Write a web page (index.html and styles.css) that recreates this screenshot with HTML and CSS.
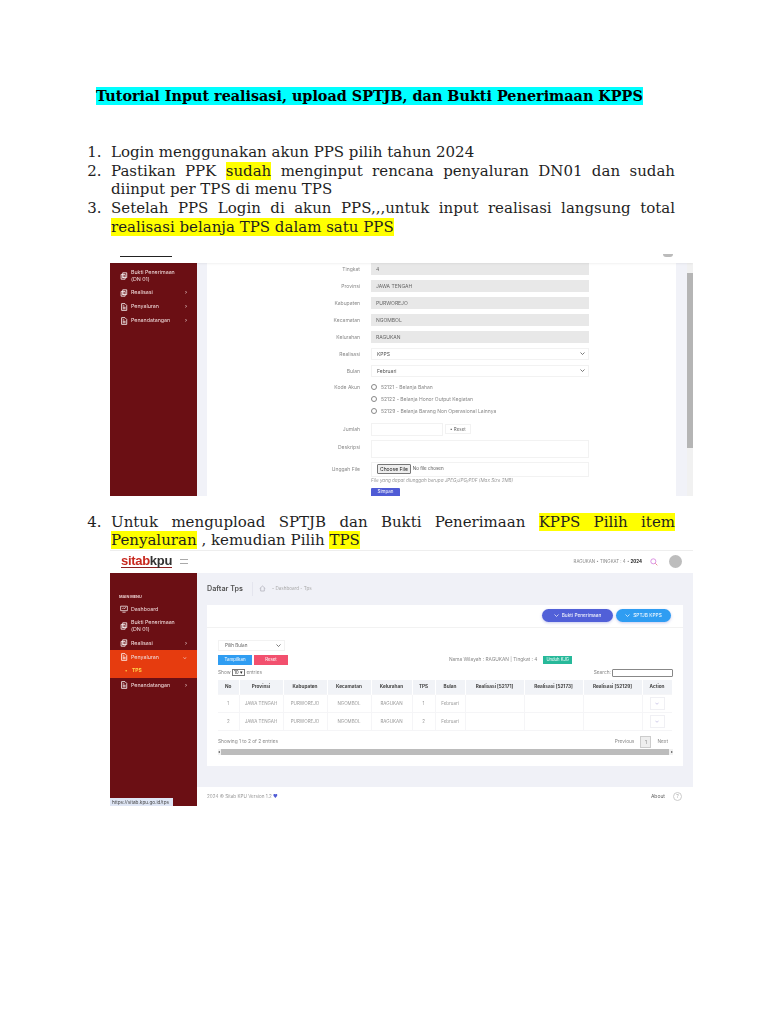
FILE: index.html
```html
<!DOCTYPE html>
<html lang="id">
<head>
  <meta charset="UTF-8">
  <meta name="viewport" content="width=device-width, initial-scale=1">
  <title>Tutorial Input Realisasi</title>
  <link rel="stylesheet" href="styles.css">
</head>
<body>

  <svg class="defs" width="0" height="0" aria-hidden="true">
    <symbol id="i-doc" viewBox="0 0 10 10">
      <path d="M2 .8h4.2L8.4 3v6.2H2z M3.4 3.6h2 M3.4 5.4h3.6 M3.4 7.2h3.6" fill="none" stroke="#fff" stroke-width="1"/>
    </symbol>
    <symbol id="i-stack" viewBox="0 0 10 10">
      <path d="M3.4 1h5v6h-5z M1.4 3h5v6h-5z M2.8 5h2.2 M2.8 7h2.2" fill="none" stroke="#fff" stroke-width="1"/>
    </symbol>
    <symbol id="i-screen" viewBox="0 0 10 10">
      <path d="M.8 1.5h8.4v5.6H.8z M3 9h4 M3 5l1.5-1.5 1 1L7.4 3" fill="none" stroke="#fff" stroke-width=".9"/>
    </symbol>
    <symbol id="i-chev" viewBox="0 0 10 6">
      <path d="M1 1l4 4 4-4" fill="none" stroke="currentColor" stroke-width="1.4"/>
    </symbol>
  </svg>

  <h1 class="title"><mark class="cyan">Tutorial Input realisasi, upload SPTJB, dan Bukti Penerimaan KPPS</mark></h1>

  <ol class="steps">
    <li>Login menggunakan akun PPS pilih tahun 2024</li>
    <li><span class="line">Pastikan PPK <mark>sudah</mark> menginput rencana penyaluran DN01 dan sudah</span> diinput per TPS di menu TPS</li>
    <li>
      <span class="line">Setelah PPS Login di akun PPS,,,untuk input realisasi langsung total</span> <mark>realisasi belanja TPS dalam satu PPS</mark>

      <!-- screenshot form realisasi -->
      <div class="shot shot-form">
        <div class="top-strip">
          <span class="logo-cut"></span>
          <span class="avatar-cut"></span>
        </div>
        <div class="shot-body">
          <nav class="side">
            <a class="side-item"><svg class="ico"><use href="#i-stack"/></svg><span>Bukti Penerimaan<br>(DN 01)</span></a>
            <a class="side-item"><svg class="ico"><use href="#i-stack"/></svg><span>Realisasi</span><i>›</i></a>
            <a class="side-item"><svg class="ico"><use href="#i-doc"/></svg><span>Penyaluran</span><i>›</i></a>
            <a class="side-item"><svg class="ico"><use href="#i-doc"/></svg><span>Penandatangan</span><i>›</i></a>
          </nav>
          <div class="gutter"></div>
          <form class="form">
            <div class="row"><label>Tingkat</label><div class="fld off">4</div></div>
            <div class="row"><label>Provinsi</label><div class="fld off">JAWA TENGAH</div></div>
            <div class="row"><label>Kabupaten</label><div class="fld off">PURWOREJO</div></div>
            <div class="row"><label>Kecamatan</label><div class="fld off">NGOMBOL</div></div>
            <div class="row"><label>Kelurahan</label><div class="fld off">RAGUKAN</div></div>
            <div class="row"><label>Realisasi</label><div class="fld sel">KPPS<svg class="chev"><use href="#i-chev"/></svg></div></div>
            <div class="row"><label>Bulan</label><div class="fld sel">Februari<svg class="chev"><use href="#i-chev"/></svg></div></div>
            <div class="row row-radio">
              <label>Kode Akun</label>
              <div class="radios">
                <div class="radio"><b></b>52121 - Belanja Bahan</div>
                <div class="radio"><b></b>52122 - Belanja Honor Output Kegiatan</div>
                <div class="radio"><b></b>52129 - Belanja Barang Non Operasional Lainnya</div>
              </div>
            </div>
            <div class="row row-sum">
              <label>Jumlah</label>
              <div class="fld sum"></div>
              <div class="reset-mini">▪ Reset</div>
            </div>
            <div class="row row-area"><label>Deskripsi</label><div class="fld area"></div></div>
            <div class="row row-file">
              <label>Unggah File</label>
              <div class="fld file"><span class="file-btn">Choose File</span>No file chosen</div>
            </div>
            <p class="hint">File yang dapat diunggah berupa JPEG/JPG/PDF (Max Size 2MB)</p>
            <div class="save">Simpan</div>
          </form>
          <div class="gutter gutter-r"></div>
          <div class="vbar"><span class="thumb"></span></div>
        </div>
      </div>
    </li>
    <li class="step-four">
      <span class="line">Untuk mengupload SPTJB dan Bukti Penerimaan <mark>KPPS Pilih item</mark></span> <mark>Penyaluran</mark> , kemudian Pilih <mark>TPS</mark>

      <!-- screenshot daftar tps -->
      <div class="shot shot-list">
        <header class="top">
          <div class="brand">
            <span class="brand-name"><em>sitab</em>kpu</span>
            <span class="burger"></span>
          </div>
          <div class="top-right">
            <span class="who">RAGUKAN • TINGKAT : 4 • <b>2024</b></span>
            <svg class="search" viewBox="0 0 12 12"><circle cx="5" cy="5" r="3.8" fill="none" stroke="#d070d8" stroke-width="1.1"/><path d="M8 8l3 3" stroke="#e86a6a" stroke-width="1.1"/></svg>
            <span class="avatar"></span>
          </div>
        </header>
        <div class="shot-body">
          <nav class="side side-list">
            <div class="side-cap">MAIN MENU</div>
            <a class="side-item"><svg class="ico"><use href="#i-screen"/></svg><span>Dashboard</span></a>
            <a class="side-item"><svg class="ico"><use href="#i-stack"/></svg><span>Bukti Penerimaan<br>(DN 01)</span></a>
            <a class="side-item"><svg class="ico"><use href="#i-stack"/></svg><span>Realisasi</span><i>›</i></a>
            <div class="side-active">
              <a class="side-item"><svg class="ico"><use href="#i-doc"/></svg><span>Penyaluran</span><i>⌄</i></a>
              <a class="side-sub">TPS</a>
            </div>
            <a class="side-item"><svg class="ico"><use href="#i-doc"/></svg><span>Penandatangan</span><i>›</i></a>
          </nav>
          <div class="right">
            <div class="main">
              <div class="crumbs">
                <h2>Daftar Tps</h2>
                <svg class="home" viewBox="0 0 10 10"><path d="M1 5l4-3.5L9 5 M2.4 4.4V8.6h5.2V4.4" fill="none" stroke="#9a9aa5" stroke-width=".8"/></svg>
                <span>- Dashboard - Tps</span>
              </div>
              <section class="card">
                <div class="card-head">
                  <span class="pill pill-violet"><svg class="pill-ico"><use href="#i-chev"/></svg>Bukti Penerimaan</span>
                  <span class="pill pill-blue"><svg class="pill-ico"><use href="#i-chev"/></svg>SPTJB KPPS</span>
                </div>
                <div class="card-body">
                  <div class="pick">Pilih Bulan<svg class="chev"><use href="#i-chev"/></svg></div>
                  <div class="tools">
                    <div class="tool-btns">
                      <span class="tbtn tbtn-blue">Tampilkan</span>
                      <span class="tbtn tbtn-red">Reset</span>
                    </div>
                    <div class="region">Nama Wilayah : RAGUKAN | Tingkat : 4 <span class="unduh">Unduh KJG</span></div>
                  </div>
                  <div class="len-row">
                    <div class="len">Show <span class="len-sel">10 ▾</span> entries</div>
                    <div class="find">Search: <span class="find-box"></span></div>
                  </div>
                  <table class="tbl">
                    <colgroup>
                      <col class="c-no"><col class="c-loc"><col class="c-loc"><col class="c-loc"><col class="c-kel">
                      <col class="c-tps"><col class="c-bln"><col class="c-rea"><col class="c-rea"><col class="c-rea"><col class="c-act">
                    </colgroup>
                    <thead>
                      <tr>
                        <th>No</th><th>Provinsi</th><th>Kabupaten</th><th>Kecamatan</th><th>Kelurahan</th>
                        <th>TPS</th><th>Bulan</th><th>Realisasi [52171]</th><th>Realisasi [52173]</th><th>Realisasi [52129]</th><th>Action</th>
                      </tr>
                    </thead>
                    <tbody>
                      <tr>
                        <td>1</td><td>JAWA TENGAH</td><td>PURWOREJO</td><td>NGOMBOL</td><td>RAGUKAN</td>
                        <td>1</td><td>Februari</td><td></td><td></td><td></td><td><span class="act"><svg class="act-ico"><use href="#i-chev"/></svg></span></td>
                      </tr>
                      <tr>
                        <td>2</td><td>JAWA TENGAH</td><td>PURWOREJO</td><td>NGOMBOL</td><td>RAGUKAN</td>
                        <td>2</td><td>Februari</td><td></td><td></td><td></td><td><span class="act"><svg class="act-ico"><use href="#i-chev"/></svg></span></td>
                      </tr>
                    </tbody>
                  </table>
                  <div class="tbl-foot">
                    <span>Showing 1 to 2 of 2 entries</span>
                    <div class="pager">Previous <span class="page-no">1</span> Next</div>
                  </div>
                  <div class="hbar"><span>◂</span><b></b><span>▸</span></div>
                </div>
              </section>
            </div>
            <footer class="foot">
              <span>2024 © Sitab KPU Version 1.2 <em>♥</em></span>
              <div class="foot-r">About <span class="help">?</span></div>
            </footer>
          </div>
        </div>
        <div class="status">https://sitab.kpu.go.id/tps</div>
      </div>
    </li>
  </ol>

</body>
</html>
```

FILE: styles.css
```css
* { margin:0; padding:0; box-sizing:border-box; }
body { width:768px; min-height:1024px; background:#fff; color:#1f1f1f; font-family:"DejaVu Serif", serif; padding-top:87px; }
.defs { position:absolute; }
mark { background:#ffff00; color:inherit; }
mark.cyan { background:#00ffff; padding:1px 0; }

.title { margin-left:96px; font-size:14.36px; line-height:18px; font-weight:700; color:#000; }

.steps { margin:38px 93px 0 87px; padding-left:24px; font-size:15px; line-height:18.7px; }
.steps li { text-align:justify; }
.steps li::marker { content:counter(list-item) ".  "; }
.line { display:block; text-align:justify; text-align-last:justify; white-space:nowrap; }
.step-four { margin-top:17px; }

/* screenshots */
.shot { position:relative; width:583px; margin-left:-1px; background:#fff; overflow:hidden; font-family:Inter, "Liberation Sans", sans-serif; font-size:5px; line-height:1.2; color:#777; text-align:left; text-align-last:auto; filter:blur(.3px); }
.shot-form { height:242px; margin-top:17px; }
.shot-list { height:256px; }
.shot-body { display:flex; }

.side { width:87px; flex:none; background:#6b0f14; color:#f0dcdc; padding-top:3px; }
.side-item { display:flex; align-items:center; gap:3px; padding:3px 0 3px 10px; font-size:5.3px; min-height:14px; }
.side-item span { flex:1; line-height:7px; }
.side-item i { font-style:normal; margin-right:10px; }
.ico { width:8px; height:8px; flex:none; }

/* form */
.top-strip { display:flex; justify-content:space-between; height:9px; box-shadow:0 1px 2px rgba(0,0,0,.06); position:relative; z-index:1; }
.logo-cut { width:52px; height:1px; margin:2px 0 0 10px; background:#222; }
.avatar-cut { width:10px; height:3px; margin-right:20px; background:#bbb; border-radius:0 0 5px 5px; }
.shot-form .shot-body { height:233px; }
.gutter { width:10px; flex:none; background:#f1f2f8; }
.form { width:469px; flex:none; }
.row { display:flex; align-items:center; gap:11px; height:12px; margin-bottom:5px; }
.row label { width:153px; flex:none; text-align:right; font-size:5px; color:#888; }
.fld { width:218px; height:12px; padding-left:5px; display:flex; align-items:center; font-size:5px; color:#666; }
.off { background:#e8e8e8; }
.sel { justify-content:space-between; padding-right:3px; border:1px solid #f2f2f2; color:#555; }
.chev { width:5px; height:3px; color:#444; }
.row-radio { height:36px; align-items:flex-start; padding-top:2px; }
.radios { display:flex; flex-direction:column; gap:5px; font-size:5px; color:#888; }
.radio { display:flex; align-items:center; gap:4px; height:7px; }
.radio b { width:6px; height:6px; border:1px solid #888; border-radius:50%; }
.row-sum { height:13px; margin-bottom:4px; }
.sum { width:72px; height:13px; border:1px solid #f2f2f2; }
.reset-mini { margin-left:-9px; height:10px; padding:2px 4px; border:1px solid #f2f2f2; font-size:4.5px; color:#666; }
.row-area { height:18px; margin-bottom:4px; align-items:flex-start; }
.row-area label { padding-top:4px; }
.area { height:18px; border:1px solid #f2f2f2; }
.row-file { height:15px; margin-bottom:0; }
.file { height:15px; border:1px solid #f2f2f2; font-size:4.5px; color:#555; gap:2px; }
.file-btn { padding:1px 2px; background:#eee; border:1px solid #777; border-radius:1px; color:#222; font-size:5px; }
.hint { margin-left:164px; font-size:4.6px; font-style:italic; color:#999; line-height:5px; padding-top:1px; }
.save { width:29px; height:9px; margin:5px 0 0 164px; background:#4f5bd5; border-radius:1px; color:#fff; font-size:4.5px; text-align:center; line-height:8px; }
.gutter-r { width:11px; }
.vbar { width:6px; flex:none; background:#f1f1f1; padding-top:10px; }
.thumb { display:block; height:175px; background:#b5b5b5; }

/* daftar tps */
.top { display:flex; justify-content:space-between; align-items:center; height:23px; border-top:1px solid #eee; }
.brand { width:87px; display:flex; align-items:center; justify-content:space-between; padding:0 9px 0 11px; }
.brand-name { font-family:"Liberation Sans", sans-serif; font-size:13px; font-weight:700; letter-spacing:-.3px; line-height:12px; color:#333; border-bottom:1px solid #8d2020; }
.brand-name em { font-style:normal; color:#c8281e; }
.burger { width:8px; height:5px; border-top:1px solid #aaa; border-bottom:1px solid #aaa; }
.top-right { display:flex; align-items:center; gap:8px; padding-right:11px; }
.who { font-size:4.4px; color:#888; }
.who b { color:#222; }
.search { width:8px; height:8px; }
.avatar { width:13px; height:13px; margin-left:3px; border-radius:50%; background:#bdbdbd; }

.shot-list .shot-body { height:233px; }
.side-list { padding-top:22px; }
.side-cap { padding-left:9px; font-size:3.8px; font-weight:700; color:#e8caca; margin-bottom:3px; }
.side-active { background:#e63c0f; padding-bottom:2px; }
.side-sub { display:block; padding-left:15px; font-size:5px; font-weight:700; color:#ffd24a; line-height:12px; }
.side-sub::before { content:"•"; display:inline-block; width:7px; }

.right { flex:1; display:flex; flex-direction:column; }
.main { height:214px; background:#f0f1f7; padding:0 10px; }
.crumbs { display:flex; align-items:center; gap:6px; height:32px; color:#aaa; }
.crumbs h2 { font-size:7.2px; font-weight:600; color:#555; padding:3px 9px 3px 0; border-right:1px solid #e4e5ee; }
.crumbs span { font-size:4.6px; }
.home { width:7px; height:7px; }
.card { width:476px; height:161px; background:#fff; }
.card-head { display:flex; justify-content:flex-end; align-items:center; gap:3px; height:23px; padding-right:12px; border-bottom:1px solid #f2f2f2; }
.pill { display:flex; align-items:center; justify-content:center; gap:3px; height:13px; border-radius:7px; color:#fff; font-size:4.8px; box-shadow:0 1px 3px rgba(70,80,200,.3); }
.pill-violet { width:71px; background:#5160d8; }
.pill-blue { width:55px; background:#2f9df2; }
.pill-ico { width:5px; height:3px; }
.card-body { padding:12px 10px 0 11px; }
.pick { display:flex; justify-content:space-between; align-items:center; width:67px; height:11px; padding:0 3px 0 6px; border:1px solid #f2f2f2; font-size:4.6px; color:#666; }
.tools { display:flex; justify-content:space-between; align-items:center; margin-top:4px; }
.tool-btns { display:flex; gap:2px; }
.tbtn { width:34px; height:10px; color:#fff; font-size:4.4px; text-align:center; line-height:10px; }
.tbtn-blue { background:#2f9df2; }
.tbtn-red { background:#f2506e; }
.region { display:flex; align-items:center; gap:6px; margin-right:101px; font-size:4.8px; color:#888; white-space:nowrap; }
.unduh { padding:1px 3px; background:#27b99a; color:#fff; font-size:4.2px; line-height:6px; }
.len-row { display:flex; justify-content:space-between; align-items:center; height:10px; margin-top:3px; font-size:4.8px; color:#888; }
.len-sel { padding:0 1px; border:1px solid #777; color:#222; font-size:4.6px; }
.find { display:flex; align-items:center; gap:1px; }
.find-box { width:61px; height:8px; border:1px solid #888; border-radius:1px; }
.tbl { width:454px; margin-top:2px; table-layout:fixed; border-collapse:collapse; border-bottom:1px solid #999; }
.c-no { width:21px; } .c-loc { width:44px; } .c-kel { width:41px; } .c-tps { width:23px; }
.c-bln { width:30px; } .c-rea { width:59px; } .c-act { width:30px; }
.tbl th { height:15px; background:#f1f3f7; border-right:1px solid #fff; color:#444; font-size:4.7px; font-weight:700; text-align:center; white-space:nowrap; overflow:hidden; }
.tbl td { height:18px; border:1px solid #f5f5f7; border-left:0; color:#999; font-size:4.5px; text-align:center; white-space:nowrap; overflow:hidden; }
.tbl td:last-child { border-right:0; }
.act { display:inline-flex; align-items:center; justify-content:center; width:15px; height:13px; border:1px solid #f0f0f4; color:#a9a2d8; }
.act-ico { width:4px; height:3px; }
.tbl-foot { display:flex; justify-content:space-between; align-items:center; height:18px; padding-top:3px; font-size:4.8px; color:#888; }
.pager { display:flex; align-items:center; gap:6px; margin-right:5px; }
.page-no { width:11px; height:12px; background:#eee; border:1px solid #ccc; text-align:center; line-height:10px; }
.hbar { display:flex; align-items:center; justify-content:space-between; height:6px; background:#f1f1f1; color:#555; font-size:4px; }
.hbar b { flex:1; height:6px; margin:0 2px 0 1px; background:#bcbcbc; }
.foot { display:flex; justify-content:space-between; align-items:center; height:19px; padding:0 11px 0 10px; color:#999; font-size:4.6px; }
.foot em { color:#4f5bd5; font-style:normal; }
.foot-r { display:flex; align-items:center; gap:8px; color:#666; font-size:5px; }
.help { width:9px; height:9px; border:1px solid #ccc; border-radius:50%; text-align:center; line-height:7px; color:#aaa; }
.status { position:absolute; left:0; bottom:0; width:63px; height:8px; padding-left:2px; background:#dfe6f5; color:#444; font-size:4.7px; line-height:8px; white-space:nowrap; }
```
